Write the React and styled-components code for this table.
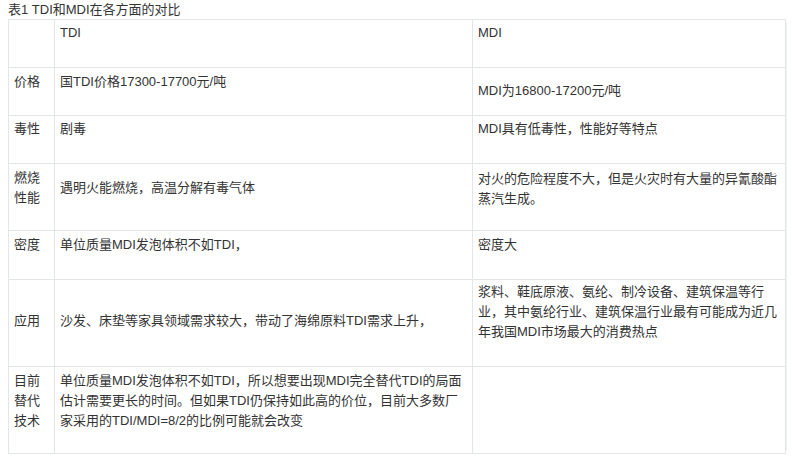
import React from "react";
import styled, { createGlobalStyle } from "styled-components";

const Global = createGlobalStyle`
  html, body { margin: 0; padding: 0; background: #fff; }
  body {
    font-family: "Liberation Sans", "Noto Sans CJK SC", sans-serif;
    font-size: 13px;
    color: #333;
  }
`;

const Page = styled.div`
  padding: 0 8px;
  width: 777px;
  box-sizing: border-box;
`;

const Caption = styled.div`
  height: 19px;
  line-height: 19px;
  color: #333;
`;

const Table = styled.table`
  border-collapse: collapse;
  table-layout: fixed;
  width: 777px;
  border: 1px solid #e2e6e6;
  box-shadow: 5px 0 0 -4px #eef1f1;
`;

const Col = styled.col`
  width: ${(p) => p.$w}px;
`;

const Row = styled.tr`
  height: ${(p) => p.$h}px;
`;

const Cell = styled.td`
  border: 1px solid #e2e6e6;
  vertical-align: top;
  padding: ${(p) => p.$pt ?? 4}px 5px 0 5px;
  line-height: 20px;
  color: #333;
  box-sizing: border-box;
  word-break: break-all;
`;

const columns = [46, 418, 313];

const rows = [
  { h: 48, cells: [{ t: "" }, { t: "TDI", pt: 3 }, { t: "MDI", pt: 3 }] },
  {
    h: 48,
    cells: [
      { t: "价格" },
      { t: "国TDI价格17300-17700元/吨" },
      { t: "MDI为16800-17200元/吨", pt: 13 },
    ],
  },
  {
    h: 48,
    cells: [{ t: "毒性", pt: 3 }, { t: "剧毒", pt: 3 }, { t: "MDI具有低毒性，性能好等特点", pt: 3 }],
  },
  {
    h: 67,
    cells: [
      { t: ["燃烧", "性能"] },
      { t: "遇明火能燃烧，高温分解有毒气体", pt: 14 },
      { t: ["对火的危险程度不大，但是火灾时有大量的异氰酸酯", "蒸汽生成。"], pt: 5 },
    ],
  },
  {
    h: 49,
    cells: [{ t: "密度" }, { t: "单位质量MDI发泡体积不如TDI，" }, { t: "密度大" }],
  },
  {
    h: 87,
    cells: [
      { t: "应用", pt: 31 },
      { t: "沙发、床垫等家具领域需求较大，带动了海绵原料TDI需求上升，", pt: 31 },
      {
        t: [
          "浆料、鞋底原液、氨纶、制冷设备、建筑保温等行",
          "业，其中氨纶行业、建筑保温行业最有可能成为近几",
          "年我国MDI市场最大的消费热点",
        ],
        pt: 2,
      },
    ],
  },
  {
    h: 87,
    cells: [
      { t: ["目前", "替代", "技术"] },
      {
        t: [
          "单位质量MDI发泡体积不如TDI，所以想要出现MDI完全替代TDI的局面",
          "估计需要更长的时间。但如果TDI仍保持如此高的价位，目前大多数厂",
          "家采用的TDI/MDI=8/2的比例可能就会改变",
        ],
      },
      { t: "" },
    ],
  },
];

function Content({ t }) {
  if (Array.isArray(t)) {
    return t.map((line, i) => (
      <React.Fragment key={i}>
        {i > 0 && <br />}
        {line}
      </React.Fragment>
    ));
  }
  return t;
}

export default function App() {
  return (
    <Page>
      <Global />
      <Caption>表1 TDI和MDI在各方面的对比</Caption>
      <Table>
        <colgroup>
          {columns.map((w, i) => (
            <Col key={i} $w={w} />
          ))}
        </colgroup>
        <tbody>
          {rows.map((r, i) => (
            <Row key={i} $h={r.h}>
              {r.cells.map((c, j) => (
                <Cell key={j} $pt={c.pt}>
                  <Content t={c.t} />
                </Cell>
              ))}
            </Row>
          ))}
        </tbody>
      </Table>
    </Page>
  );
}
